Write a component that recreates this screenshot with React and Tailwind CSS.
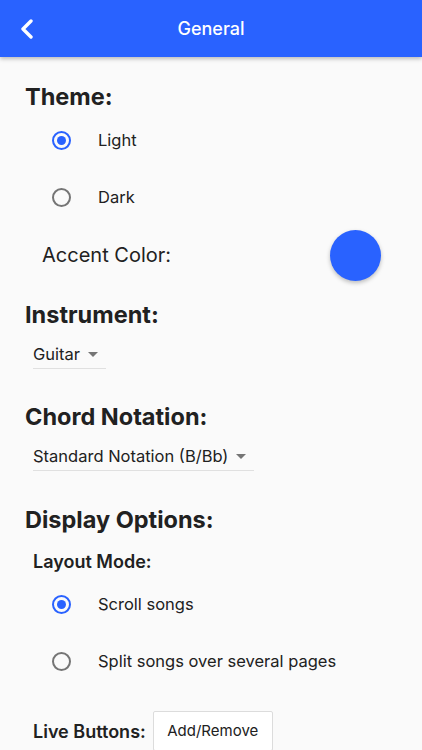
import React, { useState } from "react";

const Radio = ({ checked, label, onClick }) => (
  <button
    type="button"
    onClick={onClick}
    className="flex h-[57px] w-full items-center pl-[27px] text-left"
  >
    <span
      className={`flex h-[19px] w-[19px] items-center justify-center rounded-full border-2 ${
        checked ? "border-[#2962ff]" : "border-[#757575]"
      }`}
    >
      {checked && <span className="h-[9px] w-[9px] rounded-full bg-[#2962ff]" />}
    </span>
    <span className="ml-[27px] text-[16.5px] text-[#212121]">{label}</span>
  </button>
);

const Dropdown = ({ value }) => (
  <div className="ml-[8px] mt-[12px] inline-flex items-center border-b border-[#e0e0e0] pb-[2px] pr-[8px]">
    <span className="text-[16.5px] leading-[24px] text-[#212121]">{value}</span>
    <span className="ml-[8px] h-0 w-0 border-x-[5px] border-t-[5px] border-x-transparent border-t-[#757575]" />
  </div>
);

const Heading = ({ children, className = "" }) => (
  <h2 className={`text-[23.5px] font-bold leading-[30px] text-[#212121] ${className}`}>{children}</h2>
);

export default function App() {
  const [theme, setTheme] = useState("light");
  const [layout, setLayout] = useState("scroll");

  return (
    <div
      className="h-[750px] overflow-hidden bg-[#fafafa]"
      style={{ fontFamily: "Inter, 'Noto Sans', sans-serif" }}
    >
      {/* top bar */}
      <header className="relative z-10 grid h-[57px] grid-cols-[56px_1fr_56px] items-center bg-[#2962ff] shadow-[0_2px_4px_rgba(0,0,0,0.25)]">
        <button type="button" className="flex items-center justify-center pr-[3px]">
          <svg width="14" height="20" viewBox="0 0 14 20" fill="none">
            <path d="M11 2L3 10l8 8" stroke="white" strokeWidth="3.4" strokeLinecap="round" strokeLinejoin="round" />
          </svg>
        </button>
        <h1 className="text-center text-[18px] font-medium text-white">General</h1>
        <span />
      </header>

      <main className="px-[25px]">
        <Heading className="mt-[25px]">Theme:</Heading>
        <Radio checked={theme === "light"} label="Light" onClick={() => setTheme("light")} />
        <Radio checked={theme === "dark"} label="Dark" onClick={() => setTheme("dark")} />

        <div className="flex h-[58px] items-center justify-between pl-[17px] pr-[16px]">
          <span className="text-[20px] text-[#212121]">Accent Color:</span>
          <span className="h-[51px] w-[51px] rounded-full bg-[#2962ff] shadow-[0_2px_4px_rgba(0,0,0,0.25)]" />
        </div>

        <Heading className="mt-[16px]">Instrument:</Heading>
        <Dropdown value="Guitar" />

        <Heading className="mt-[33px]">Chord Notation:</Heading>
        <Dropdown value="Standard Notation (B/Bb)" />

        <Heading className="mt-[34px]">Display Options:</Heading>
        <h3 className="ml-[8px] mt-[15px] text-[18px] font-semibold leading-[24px] text-[#212121]">Layout Mode:</h3>
        <div className="mt-[2px]">
          <Radio checked={layout === "scroll"} label="Scroll songs" onClick={() => setLayout("scroll")} />
          <Radio
            checked={layout === "split"}
            label="Split songs over several pages"
            onClick={() => setLayout("split")}
          />
        </div>

        <div className="ml-[8px] mt-[21px] flex items-center">
          <span className="text-[18px] font-semibold text-[#212121]">Live Buttons:</span>
          <button
            type="button"
            className="ml-[7px] h-[40px] w-[120px] rounded-[2px] border border-[#dcdcdc] bg-white text-[15px] text-[#212121]"
          >
            Add/Remove
          </button>
        </div>
      </main>
    </div>
  );
}
